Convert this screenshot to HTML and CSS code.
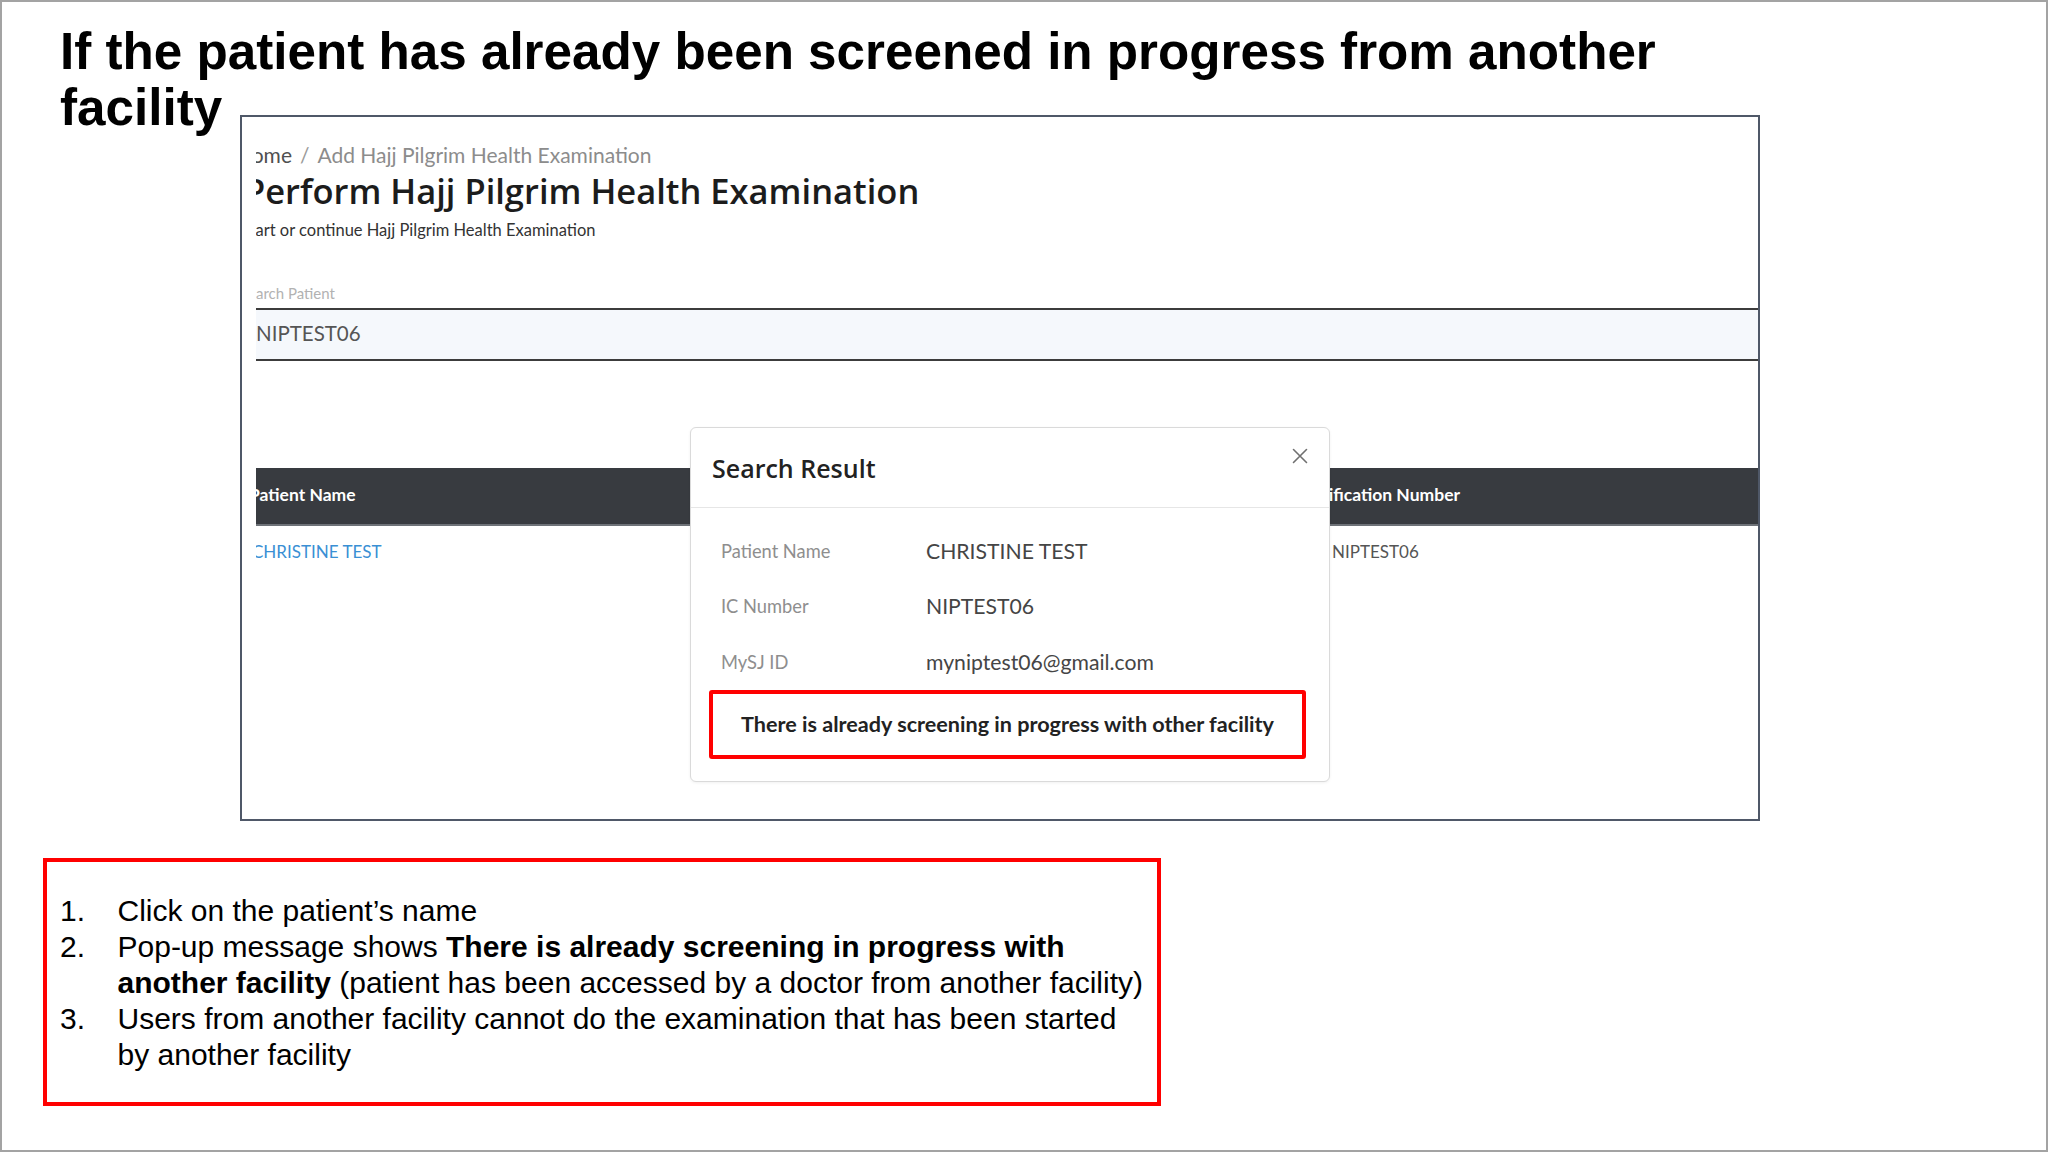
FILE: index.html
```html
<!DOCTYPE html>
<html lang="en">
<head>
<meta charset="utf-8">
<title>Screening in progress from another facility</title>
<link rel="stylesheet" href="styles.css">
</head>
<body>
<div class="slide">
  <h1 class="slide-title">If the patient has already been screened in progress from another facility</h1>

  <div class="shot">
    <div class="app">
      <div class="crumbs"><span class="crumb-home">Home</span><span class="crumb-sep">/</span><span class="crumb-cur">Add Hajj Pilgrim Health Examination</span></div>
      <div class="page-title">Perform Hajj Pilgrim Health Examination</div>
      <div class="page-sub">Start or continue Hajj Pilgrim Health Examination</div>
      <div class="field-label">Search Patient</div>
      <div class="search-input">NIPTEST06</div>

      <div class="table">
        <div class="thead">
          <div class="th th-name">Patient Name</div>
          <div class="th th-id">Identification Number</div>
        </div>
        <div class="trow">
          <div class="td td-name">CHRISTINE TEST</div>
          <div class="td td-id">NIPTEST06</div>
        </div>
      </div>
    </div>

    <div class="modal">
      <div class="modal-head">
        <div class="modal-title">Search Result</div>
        <svg class="modal-close" width="16" height="16" viewBox="0 0 16 16" aria-hidden="true">
          <path d="M1.5 1.5 L14.5 14.5 M14.5 1.5 L1.5 14.5" stroke="#707070" stroke-width="1.6" fill="none" stroke-linecap="round"/>
        </svg>
      </div>
      <div class="modal-body">
        <div class="info-row"><div class="info-label">Patient Name</div><div class="info-value">CHRISTINE TEST</div></div>
        <div class="info-row"><div class="info-label">IC Number</div><div class="info-value">NIPTEST06</div></div>
        <div class="info-row"><div class="info-label">MySJ ID</div><div class="info-value">myniptest06@gmail.com</div></div>
        <div class="alert">There is already screening in progress with other facility</div>
      </div>
    </div>
  </div>

  <div class="notes">
    <div class="note"><span class="num">1.</span><span class="txt">Click on the patient’s name</span></div>
    <div class="note"><span class="num">2.</span><span class="txt">Pop-up message shows <b>There is already screening in progress with another facility</b> (patient has been accessed by a doctor from another facility)</span></div>
    <div class="note"><span class="num">3.</span><span class="txt">Users from another facility cannot do the examination that has been started by another facility</span></div>
  </div>
</div>
</body>
</html>
```

FILE: styles.css
```css
html, body {
  margin: 0;
  padding: 0;
  background: #ffffff;
}

.slide {
  box-sizing: border-box;
  width: 2048px;
  height: 1152px;
  border: 2px solid #a3a3a3;
  background: #ffffff;
  overflow: hidden;
  font-family: "Liberation Sans", Arial, sans-serif;
  color: #000;
}

.slide-title {
  margin: 22px 0 0 58px;
  width: 1640px;
  font-family: "Liberation Sans", Arial, sans-serif;
  font-weight: 700;
  font-size: 51.2px;
  line-height: 56px;
  color: #000;
}

/* screenshot frame */
.shot {
  position: relative;
  box-sizing: border-box;
  margin: -21px 0 0 238px;
  width: 1520px;
  height: 706px;
  border: 2px solid #4f5868;
  padding-left: 14px;
  background: #fff;
}

.app {
  height: 100%;
  overflow: hidden;
  font-family: Lato, "Open Sans", sans-serif;
  background: #fff;
}

.crumbs {
  padding-top: 25.5px;
  margin-left: -20px;
  font-size: 21px;
  line-height: 24px;
  white-space: nowrap;
}
.crumb-home { color: #505050; }
.crumb-sep { color: #9a9a9a; margin: 0 8px; }
.crumb-cur { color: #8c8c8c; }

.page-title {
  margin: 6.5px 0 0 -12px;
  font-family: "Open Sans", Lato, sans-serif;
  font-size: 34.5px;
  line-height: 36px;
  font-weight: 600;
  color: #1c1c1c;
  white-space: nowrap;
}

.page-sub {
  margin: 11px 0 0 -15px;
  font-size: 16.5px;
  line-height: 20px;
  color: #333;
  white-space: nowrap;
}

.field-label {
  margin: 44px 0 0 -16px;
  font-size: 15px;
  line-height: 18px;
  color: #b2b2b2;
  white-space: nowrap;
}

.search-input {
  box-sizing: border-box;
  margin-top: 6px;
  height: 53px;
  border-top: 2px solid #3c3c3c;
  border-bottom: 2px solid #3c3c3c;
  background: #f5f8fc;
  padding-bottom: 3px;
  font-size: 20.5px;
  line-height: 46px;
  color: #555;
}

.table {
  margin-top: 107px;
}

.thead {
  display: grid;
  grid-template-columns: 1032px 1fr;
  height: 58px;
  box-sizing: border-box;
  background: #383b40;
  border-bottom: 2px solid #6e7278;
  padding-bottom: 3px;
  line-height: 53px;
  color: #fff;
  font-weight: 700;
  font-size: 17.5px;
}
.th { white-space: nowrap; }
.th-name { margin-left: -7px; }

.trow {
  display: grid;
  grid-template-columns: 1015px 1fr;
  height: 50px;
  line-height: 51px;
  font-size: 17px;
}
.td-name { margin-left: -4px; color: #3a8fd4; }
.td-id { padding-left: 61px; color: #555; }

/* modal overlay */
.modal {
  position: absolute;
  left: 448px;
  top: 310px;
  box-sizing: border-box;
  width: 640px;
  background: #fff;
  border: 1px solid #dadada;
  border-radius: 6px;
  box-shadow: 0 1px 3px rgba(0,0,0,0.06);
  font-family: Lato, "Open Sans", sans-serif;
}

.modal-head {
  display: flex;
  justify-content: space-between;
  align-items: center;
  height: 79px;
  padding-left: 21px;
  border-bottom: 1px solid #e6e6e6;
}
.modal-title {
  font-family: "Open Sans", Lato, sans-serif;
  font-size: 25px;
  font-weight: 600;
  color: #222;
}
.modal-close {
  align-self: flex-start;
  margin: 20px 21px 0 0;
}

.modal-body {
  padding: 15px 23px 22px 18px;
}

.info-row {
  display: grid;
  grid-template-columns: 205px 1fr;
  align-items: center;
  height: 55.5px;
  padding-left: 12px;
}
.info-label {
  font-size: 18.3px;
  color: #8e8e8e;
}
.info-value {
  font-size: 21.2px;
  color: #454545;
}

.alert {
  box-sizing: border-box;
  height: 69px;
  border: 4px solid #ff0000;
  border-radius: 3px;
  display: flex;
  align-items: center;
  justify-content: center;
  font-size: 21.6px;
  font-weight: 700;
  color: #222;
}

/* notes box */
.notes {
  box-sizing: border-box;
  margin: 37px 0 0 41px;
  width: 1118px;
  height: 248px;
  border: 4px solid #ff0000;
  padding: 31px 12px 0 13px;
  font-family: "Liberation Sans", Arial, sans-serif;
  font-size: 30px;
  line-height: 36px;
  color: #000;
}
.note {
  display: grid;
  grid-template-columns: 57.5px 1fr;
}
.note b { font-weight: 700; }
```
